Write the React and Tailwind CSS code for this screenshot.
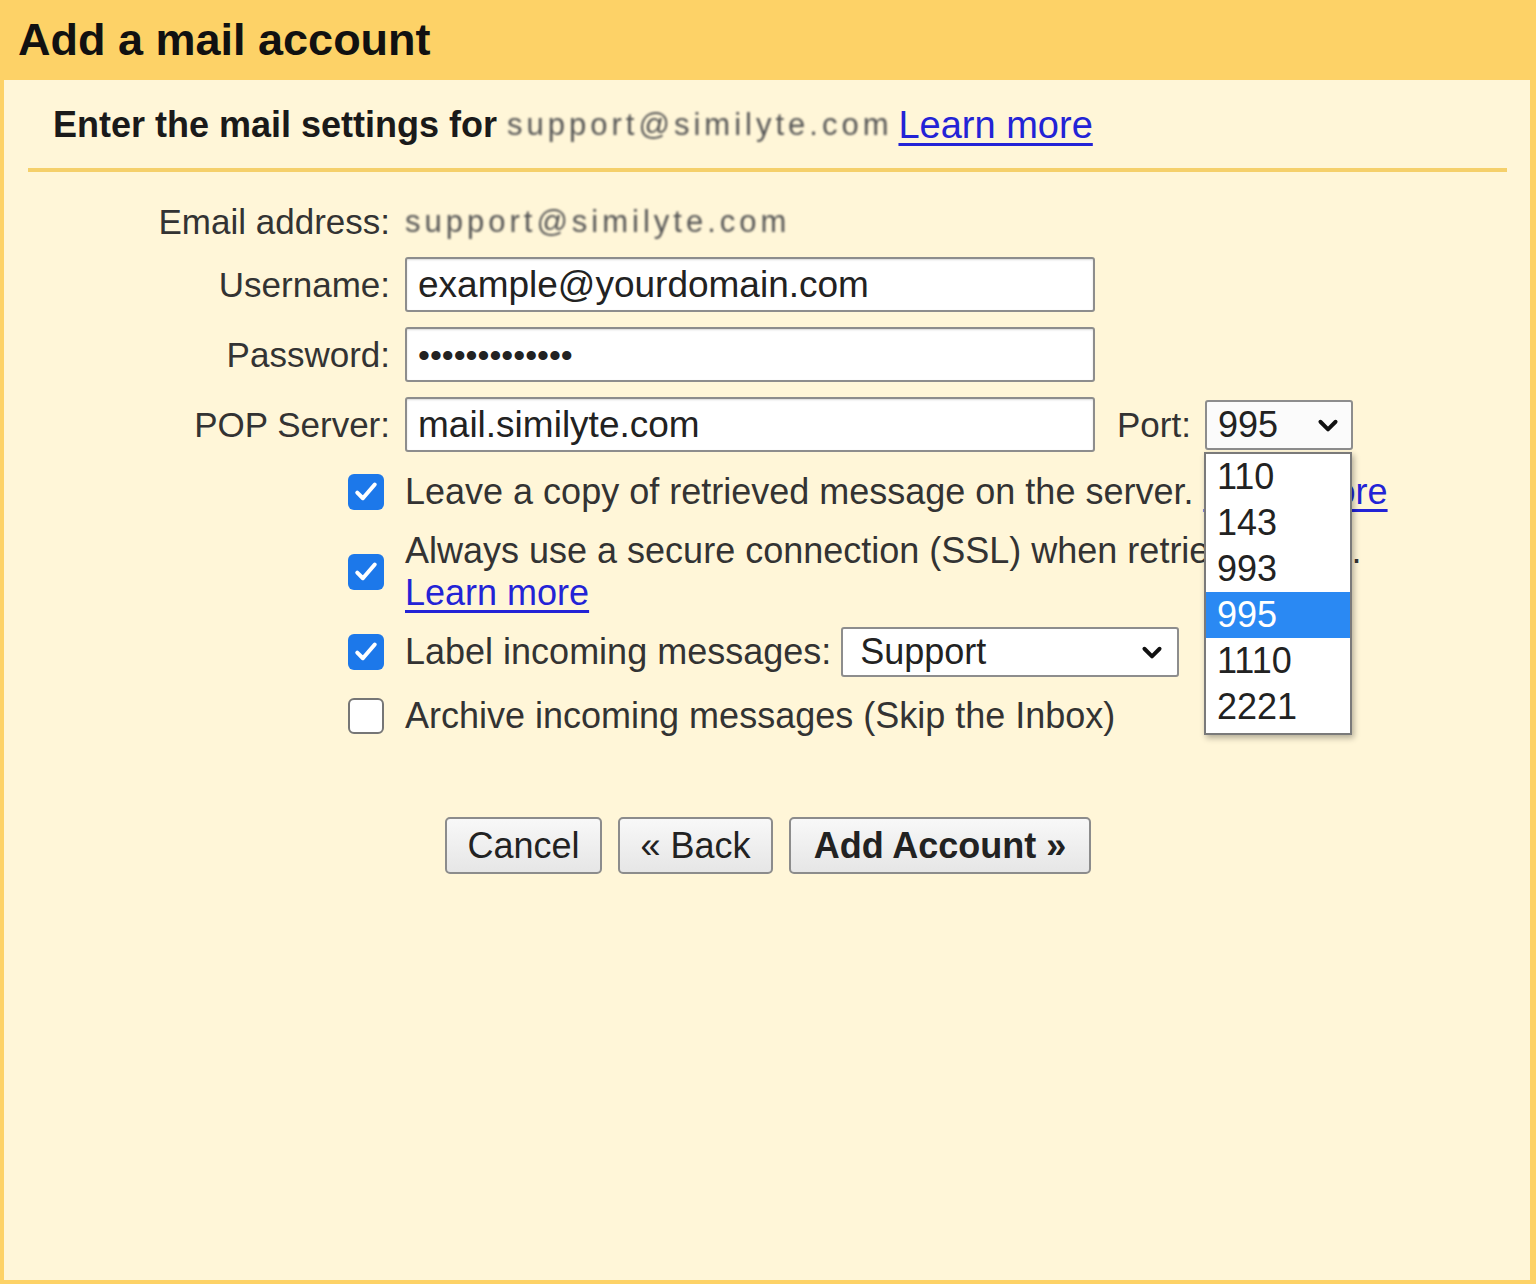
import React from "react";

const Check = () => (
  <div className="w-[36px] h-[36px] rounded-[6px] bg-[#1c78ea] flex items-center justify-center shrink-0">
    <svg width="30" height="30" viewBox="0 0 24 24" fill="none" stroke="white" strokeWidth="3.2" strokeLinecap="round" strokeLinejoin="round">
      <path d="M5 12.5l4.5 4.5L19 6" />
    </svg>
  </div>
);

const Unchecked = () => (
  <div className="w-[36px] h-[36px] rounded-[6px] border-[2.5px] border-[#767676] bg-white shrink-0" />
);

const Chevron = () => (
  <svg width="26" height="26" viewBox="0 0 24 24" fill="none" stroke="#111" strokeWidth="3.6" strokeLinecap="round" strokeLinejoin="round">
    <path d="M5 9l7 7 7-7" />
  </svg>
);

const Input = ({ children }) => (
  <div className="w-[690px] h-[55px] bg-white border-2 border-[#8d8d8d] rounded-[3px] flex items-center pl-[11px] text-[37px] text-[#222] shadow-[inset_0_1px_2px_rgba(0,0,0,0.15)]">
    {children}
  </div>
);

const Label = ({ children }) => (
  <div className="w-[401px] text-right pr-[15px] text-[35px] text-[#333] shrink-0">{children}</div>
);

const Button = ({ children, bold, w }) => (
  <div
    className={`h-[57px] ${w} border-2 border-[#8c8c8c] rounded-[5px] bg-gradient-to-b from-[#f8f8f8] to-[#e6e6e6] flex items-center justify-center text-[36px] text-[#222] ${bold ? "font-bold" : ""}`}
  >
    {children}
  </div>
);

export default function App() {
  return (
    <div
      className="w-[1536px] h-[1284px] bg-[#fdd267] flex flex-col text-[#222] leading-[44px]"
      style={{ fontFamily: '"Liberation Sans", Arial, sans-serif' }}
    >
      <div className="h-[80px] shrink-0 flex items-center pl-[18px] text-[45px] font-bold text-[#111]">
        Add a mail account
      </div>
      <div className="flex-1 ml-[4px] mr-[6px] mb-[4px] bg-[#fff6d8] relative flex flex-col">
        <div className="pt-[23px] pl-[49px] flex items-center text-[36px] font-bold text-[#1a1a1a] h-[67px]">
          <span>Enter the mail settings for</span>
          <span className="ml-[10px] text-[31px] tracking-[4px] font-normal text-[#555] blur-[1.3px]">support@similyte.com</span>
          <span className="ml-[6px] text-[38px] font-normal text-[#2323d6] underline underline-offset-[5px]">Learn more</span>
        </div>
        <div className="mt-[21px] ml-[24px] mr-[23px] h-[4px] bg-[#f5d06b]" />

        <div className="mt-[28px] flex items-center h-[44px]">
          <Label>Email address:</Label>
          <span className="text-[31px] tracking-[4px] text-[#555] blur-[1.3px]">support@similyte.com</span>
        </div>
        <div className="mt-[13px] flex items-center">
          <Label>Username:</Label>
          <Input>example@yourdomain.com</Input>
        </div>
        <div className="mt-[15px] flex items-center">
          <Label>Password:</Label>
          <Input>
            <span className="text-[34px]">•••••••••••••</span>
          </Input>
        </div>
        <div className="mt-[15px] flex items-center">
          <Label>POP Server:</Label>
          <Input>mail.similyte.com</Input>
          <span className="ml-[22px] text-[35px] text-[#333]">Port:</span>
          <div className="ml-[14px] w-[148px] h-[50px] bg-[#fbfbfb] border-2 border-[#8d8d8d] rounded-[3px] flex items-center justify-between pl-[11px] pr-[10px] text-[36px]">
            <span>995</span>
            <Chevron />
          </div>
        </div>

        <div className="mt-[18px] flex items-center h-[44px] pl-[344px]">
          <Check />
          <span className="ml-[21px] text-[36px] text-[#333]">
            Leave a copy of retrieved message on the server.{" "}
            <span className="text-[#2323d6] underline underline-offset-[5px]">Learn more</span>
          </span>
        </div>
        <div className="mt-[16px] flex items-center pl-[344px] leading-[42px]">
          <Check />
          <div className="ml-[21px] text-[36px] text-[#333]">
            <div>Always use a secure connection (SSL) when retrieving mail.</div>
            <div className="text-[#2323d6] underline underline-offset-[5px]">Learn more</div>
          </div>
        </div>
        <div className="mt-[13px] flex items-center pl-[344px]">
          <Check />
          <span className="ml-[21px] text-[36px] text-[#333]">Label incoming messages:</span>
          <div className="ml-[10px] w-[338px] h-[50px] bg-white border-2 border-[#8d8d8d] rounded-[3px] flex items-center justify-between pl-[17px] pr-[12px] text-[36px]">
            <span>Support</span>
            <Chevron />
          </div>
        </div>
        <div className="mt-[17px] flex items-center h-[44px] pl-[344px]">
          <Unchecked />
          <span className="ml-[21px] text-[36px] text-[#333]">Archive incoming messages (Skip the Inbox)</span>
        </div>

        <div className="mt-[79px] flex justify-center gap-[16px] pl-[2px]">
          <Button w="w-[157px]">Cancel</Button>
          <Button w="w-[155px]">« Back</Button>
          <Button w="w-[302px]" bold>
            Add Account »
          </Button>
        </div>

        <div className="absolute left-[1200px] top-[372px] w-[148px] bg-white border-2 border-[#7a7a7a] shadow-[2px_3px_6px_rgba(0,0,0,0.3)] pb-[3px] text-[36px] text-[#222] leading-[46px]">
          <div className="pl-[11px]">110</div>
          <div className="pl-[11px]">143</div>
          <div className="pl-[11px]">993</div>
          <div className="pl-[11px] bg-[#2a89f3] text-white">995</div>
          <div className="pl-[11px]">1110</div>
          <div className="pl-[11px]">2221</div>
        </div>
      </div>
    </div>
  );
}
